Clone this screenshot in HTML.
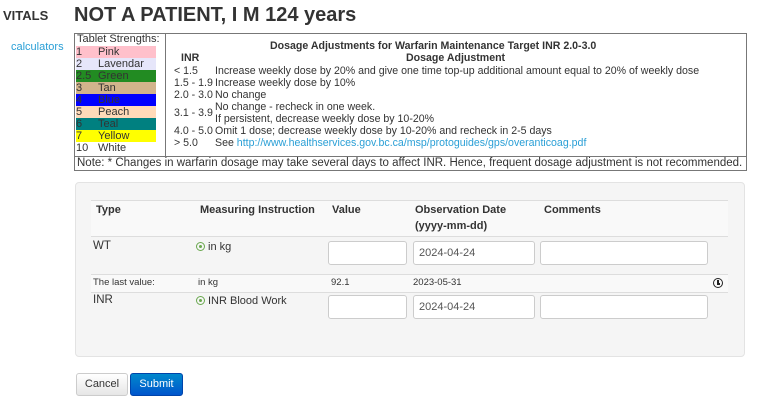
<!DOCTYPE html>
<html><head><style>
*{margin:0;padding:0;box-sizing:border-box}
body{width:768px;height:404px;background:#fff;font-family:"Liberation Sans",sans-serif;color:#333;position:relative;overflow:hidden}
.a{position:absolute;white-space:nowrap}
.cb{position:absolute;left:76px;width:80px;height:12px;font-size:11px;line-height:12px;color:#333}
.cb span{position:absolute;left:22px}
.r{position:absolute;left:174px;font-size:10.6px;line-height:12px;color:#333;white-space:nowrap}
.r b{font-weight:normal;display:inline-block;width:41px}
.inp{position:absolute;height:24px;border:1px solid #ccc;border-radius:3px;background:#fff;font-size:11px;line-height:22px;padding-left:5px;color:#555}
.th{position:absolute;font-size:11px;font-weight:bold;color:#333;line-height:16px}
.radio{display:inline-block;width:9px;height:9px;border:1.5px solid #6aa84f;border-radius:50%;position:relative;vertical-align:-1px;margin-right:3px}
.radio:after{content:"";position:absolute;left:1.5px;top:1.5px;width:3px;height:3px;border-radius:50%;background:#6aa84f}
.lv{position:absolute;top:277px;font-size:9.5px}
</style></head><body>
<div class="a" style="left:3px;top:8px;font-size:13px;font-weight:bold;color:#333">VITALS</div>
<div class="a" style="left:74px;top:4px;font-size:20px;font-weight:bold;color:#333">NOT A PATIENT, I M 124 years</div>
<div class="a" style="left:11px;top:41px;font-size:11px;color:#2a9fd6">calculators</div>

<div class="a" style="left:74px;top:33px;width:673px;height:138px;border:1px solid #777"></div>
<div class="a" style="left:165px;top:33px;width:1px;height:123px;background:#777"></div>
<div class="a" style="left:74px;top:156px;width:673px;height:1px;background:#777"></div>
<div class="a" style="left:77px;top:33px;font-size:11px;line-height:12px;color:#333">Tablet Strengths:</div>
<div class="cb" style="top:46px;background:#ffc0cb">1<span>Pink</span></div>
<div class="cb" style="top:58px;background:#e6e6fa">2<span>Lavendar</span></div>
<div class="cb" style="top:70px;background:#228b22">2.5<span>Green</span></div>
<div class="cb" style="top:82px;background:#d2b48c">3<span>Tan</span></div>
<div class="cb" style="top:94px;background:#0000ff">4<span>Blue</span></div>
<div class="cb" style="top:106px;background:#ffdab9">5<span>Peach</span></div>
<div class="cb" style="top:118px;background:#008080">6<span>Teal</span></div>
<div class="cb" style="top:130px;background:#ffff00">7<span>Yellow</span></div>
<div class="cb" style="top:142px">10<span>White</span></div>

<div class="a" style="left:270px;top:40px;font-size:10.6px;font-weight:bold">Dosage Adjustments for Warfarin Maintenance Target INR 2.0-3.0</div>
<div class="a" style="left:181px;top:52px;font-size:10.6px;font-weight:bold">INR</div>
<div class="a" style="left:406px;top:52px;font-size:10.6px;font-weight:bold">Dosage Adjustment</div>
<div class="r" style="top:65px"><b>&lt; 1.5</b>Increase weekly dose by 20% and give one time top-up additional amount equal to 20% of weekly dose</div>
<div class="r" style="top:77px"><b>1.5 - 1.9</b>Increase weekly dose by 10%</div>
<div class="r" style="top:89px"><b>2.0 - 3.0</b>No change</div>
<div class="r" style="top:101px;left:215px">No change - recheck in one week.</div>
<div class="r" style="top:107px"><b>3.1 - 3.9</b></div>
<div class="r" style="top:113px;left:215px">If persistent, decrease weekly dose by 10-20%</div>
<div class="r" style="top:125px"><b>4.0 - 5.0</b>Omit 1 dose; decrease weekly dose by 10-20% and recheck in 2-5 days</div>
<div class="r" style="top:137px"><b>&gt; 5.0</b>See <span style="color:#2a9fd6">http://www.healthservices.gov.bc.ca/msp/protoguides/gps/overanticoag.pdf</span></div>
<div class="a" style="left:77px;top:157px;font-size:11.5px;line-height:13px">Note: * Changes in warfarin dosage may take several days to affect INR. Hence, frequent dosage adjustment is not recommended.</div>

<div class="a" style="left:75px;top:182px;width:670px;height:175px;background:#f5f5f5;border:1px solid #e3e3e3;border-radius:4px"></div>
<div class="a" style="left:91px;top:200px;width:637px;height:36px;background:#f9f9f9;border-top:1px solid #ddd"></div>
<div class="th" style="left:96px;top:202px">Type</div>
<div class="th" style="left:200px;top:202px">Measuring Instruction</div>
<div class="th" style="left:332px;top:202px">Value</div>
<div class="th" style="left:415px;top:202px">Observation Date<br>(yyyy-mm-dd)</div>
<div class="th" style="left:544px;top:202px">Comments</div>
<div class="a" style="left:91px;top:236px;width:637px;height:1px;background:#ddd"></div>
<div class="a" style="left:93px;top:240px;font-size:11.5px">WT</div>
<div class="a" style="left:196px;top:241px;font-size:11px"><span class="radio"></span>in kg</div>
<div class="inp" style="left:328px;top:241px;width:79px"></div>
<div class="inp" style="left:413px;top:241px;width:122px">2024-04-24</div>
<div class="inp" style="left:540px;top:241px;width:168px"></div>
<div class="a" style="left:91px;top:274px;width:637px;height:1px;background:#ddd"></div>
<div class="a" style="left:91px;top:275px;width:637px;height:17px;background:#f9f9f9"></div>
<div class="lv" style="left:93px">The last value:</div>
<div class="lv" style="left:198px">in kg</div>
<div class="lv" style="left:331px">92.1</div>
<div class="lv" style="left:413px">2023-05-31</div>
<div class="a" style="left:713px;top:278px;width:10px;height:10px;border:1.5px solid #222;border-radius:50%"></div>
<div class="a" style="left:717px;top:280px;width:1.5px;height:4px;background:#222"></div>
<div class="a" style="left:717px;top:283px;width:3px;height:1.5px;background:#222"></div>
<div class="a" style="left:91px;top:292px;width:637px;height:1px;background:#ddd"></div>
<div class="a" style="left:93px;top:294px;font-size:11.5px">INR</div>
<div class="a" style="left:196px;top:295px;font-size:11px"><span class="radio"></span>INR Blood Work</div>
<div class="inp" style="left:328px;top:295px;width:79px"></div>
<div class="inp" style="left:413px;top:295px;width:122px">2024-04-24</div>
<div class="inp" style="left:540px;top:295px;width:168px"></div>

<div class="a" style="left:76px;top:373px;width:52px;height:23px;border:1px solid #ccc;border-radius:3px;background:linear-gradient(#fff,#e6e6e6);font-size:11px;line-height:21px;text-align:center;color:#333">Cancel</div>
<div class="a" style="left:130px;top:373px;width:53px;height:23px;border:1px solid #0044aa;border-radius:3px;background:linear-gradient(#0088cc,#0055cc);font-size:11px;line-height:21px;text-align:center;color:#fff">Submit</div>
</body></html>
